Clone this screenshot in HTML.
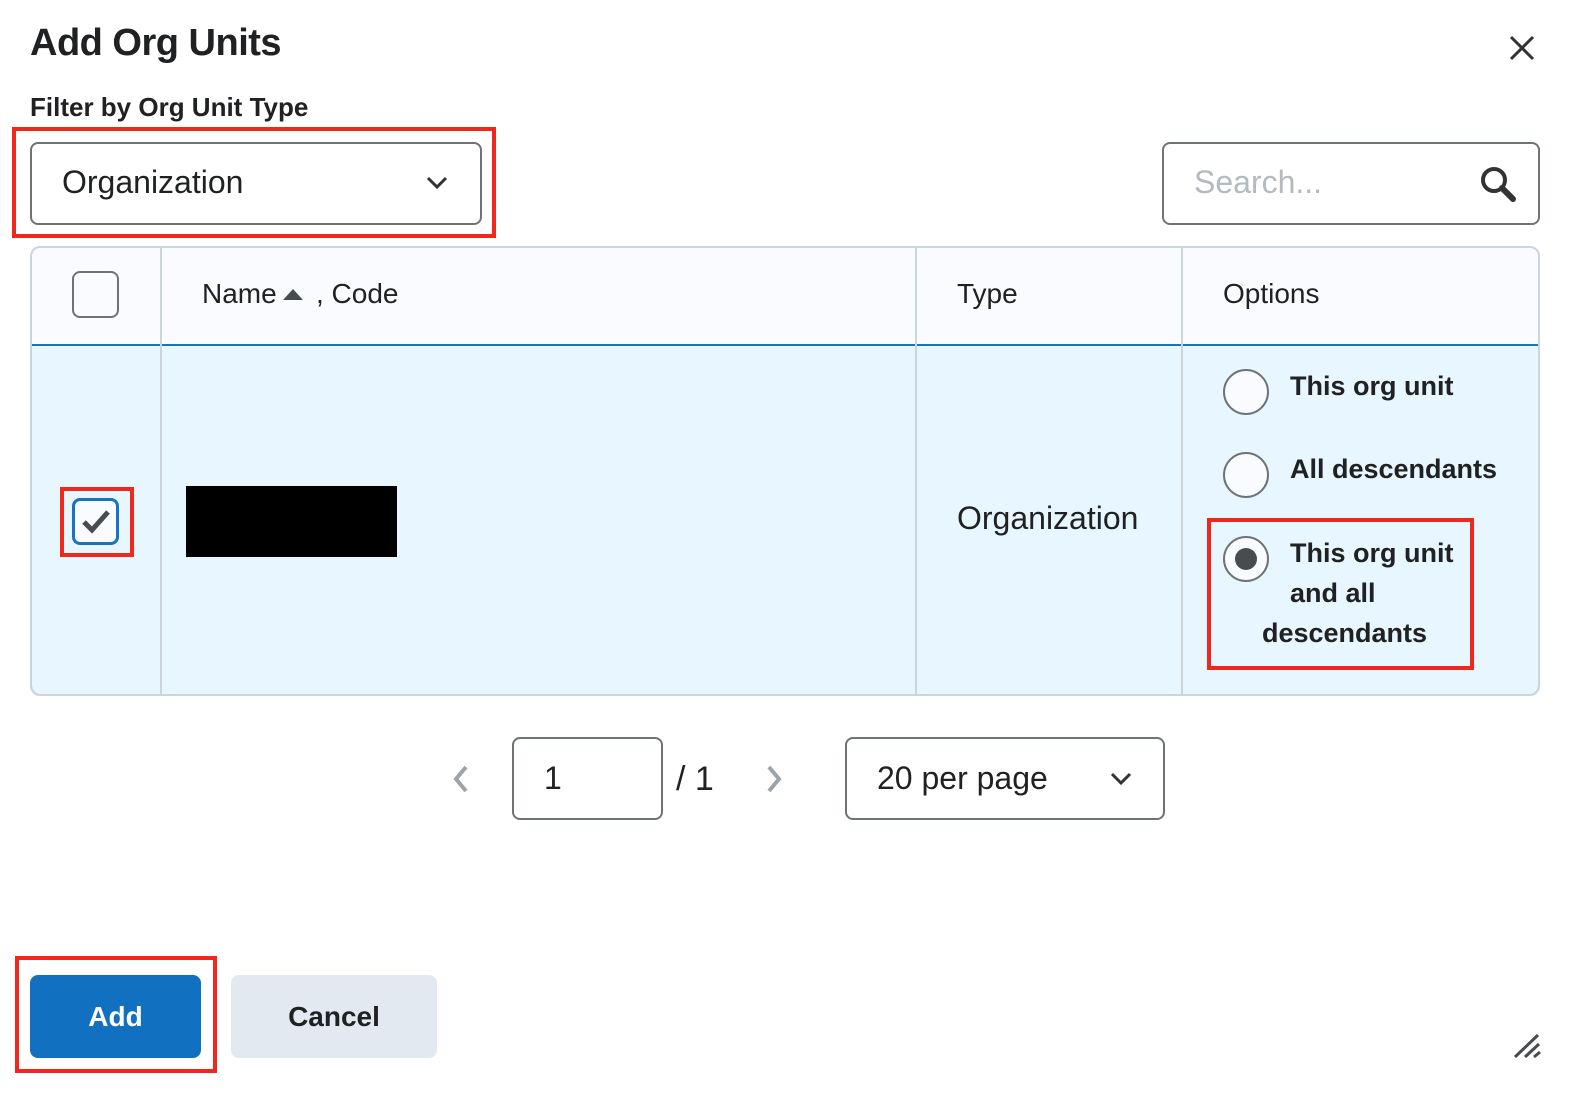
<!DOCTYPE html>
<html><head><style>
body{margin:0;width:1574px;height:1102px;background:#fff;position:relative;font-family:"Liberation Sans",sans-serif;color:#202122;overflow:hidden}
.a{position:absolute}
.red{position:absolute;border:4px solid #f2271c;box-sizing:border-box}
.radio{position:absolute;width:46px;height:46px;border:2px solid #6e7376;border-radius:50%;background:#f9fbff;box-sizing:border-box}
.rt{position:absolute;font-weight:bold;font-size:27px;line-height:40px}
</style></head><body>
<div class="a" style="left:30px;top:22px;font-size:38px;font-weight:bold;letter-spacing:-0.5px">Add Org Units</div>
<svg class="a" style="left:1508px;top:34px" width="28" height="28"><path d="M3 3L25 25M25 3L3 25" stroke="#333" stroke-width="3"/></svg>
<div class="a" style="left:30px;top:92px;font-size:26px;font-weight:bold">Filter by Org Unit Type</div>
<div class="red" style="left:12px;top:127px;width:484px;height:111px"></div>
<div class="a" style="left:30px;top:142px;width:452px;height:83px;border:2px solid #6e7376;border-radius:8px;box-sizing:border-box"></div>
<div class="a" style="left:62px;top:164px;font-size:32px">Organization</div>
<svg class="a" style="left:426px;top:176px" width="22" height="14"><path d="M2 2L11 11L20 2" stroke="#333" stroke-width="3" fill="none"/></svg>
<div class="a" style="left:1162px;top:142px;width:378px;height:83px;border:2px solid #6e7376;border-radius:8px;box-sizing:border-box"></div>
<div class="a" style="left:1194px;top:164px;font-size:32px;color:#b4bac0">Search...</div>
<svg class="a" style="left:1478px;top:164px" width="40" height="40"><circle cx="16" cy="16" r="11" stroke="#333" stroke-width="4" fill="none"/><path d="M24 24L35 35" stroke="#333" stroke-width="6" stroke-linecap="round"/></svg>
<!-- table -->
<div class="a" style="left:30px;top:246px;width:1510px;height:450px;border:2px solid #cdd5dc;border-radius:10px;box-sizing:border-box;background:#f9fbff;overflow:hidden">
 <div class="a" style="left:-2px;top:96px;width:1510px;height:352px;background:#e8f6ff;border:2px solid #1a73c0;border-radius:0 0 10px 10px;box-sizing:border-box"></div>
 <div class="a" style="left:128px;top:0;width:2px;height:450px;background:#cdd5dc"></div>
 <div class="a" style="left:883px;top:0;width:2px;height:450px;background:#cdd5dc"></div>
 <div class="a" style="left:1149px;top:0;width:2px;height:450px;background:#cdd5dc"></div>
</div>
<div class="a" style="left:72px;top:271px;width:47px;height:47px;border:2px solid #6e7376;border-radius:8px;box-sizing:border-box;background:#f9fbff"></div>
<div class="a" style="left:202px;top:278px;font-size:28px">Name</div>
<svg class="a" style="left:283px;top:288px" width="20" height="12"><path d="M0 12L10 1L20 12Z" fill="#494c4e"/></svg>
<div class="a" style="left:316px;top:278px;font-size:28px">, Code</div>
<div class="a" style="left:957px;top:278px;font-size:28px">Type</div>
<div class="a" style="left:1223px;top:278px;font-size:28px">Options</div>
<div class="red" style="left:60px;top:487px;width:74px;height:70px"></div>
<div class="a" style="left:72px;top:498px;width:47px;height:47px;border:3px solid #1a73c0;border-radius:8px;box-sizing:border-box;background:#f9fbff"></div>
<svg class="a" style="left:80px;top:507px" width="32" height="28"><path d="M4 15L12 23L28 5" stroke="#494c4e" stroke-width="5" fill="none"/></svg>
<div class="a" style="left:186px;top:486px;width:211px;height:71px;background:#000"></div>
<div class="a" style="left:957px;top:500px;font-size:32px">Organization</div>
<div class="radio" style="left:1223px;top:369px"></div>
<div class="rt" style="left:1290px;top:366px">This org unit</div>
<div class="radio" style="left:1223px;top:452px"></div>
<div class="rt" style="left:1290px;top:449px">All descendants</div>
<div class="red" style="left:1207px;top:518px;width:267px;height:152px"></div>
<div class="radio" style="left:1223px;top:536px"></div>
<div class="a" style="left:1235px;top:548px;width:22px;height:22px;border-radius:50%;background:#494c4e"></div>
<div class="rt" style="left:1290px;top:533px">This org unit</div>
<div class="rt" style="left:1290px;top:573px">and all</div>
<div class="rt" style="left:1262px;top:613px">descendants</div>
<!-- pager -->
<svg class="a" style="left:451px;top:764px" width="20" height="30"><path d="M15 3L5 15L15 27" stroke="#9ea3a7" stroke-width="4" fill="none"/></svg>
<div class="a" style="left:512px;top:737px;width:151px;height:83px;border:2px solid #6e7376;border-radius:8px;box-sizing:border-box"></div>
<div class="a" style="left:544px;top:760px;font-size:32px">1</div>
<div class="a" style="left:676px;top:760px;font-size:34px">/ 1</div>
<svg class="a" style="left:764px;top:764px" width="20" height="30"><path d="M5 3L15 15L5 27" stroke="#9ea3a7" stroke-width="4" fill="none"/></svg>
<div class="a" style="left:845px;top:737px;width:320px;height:83px;border:2px solid #6e7376;border-radius:8px;box-sizing:border-box"></div>
<div class="a" style="left:877px;top:760px;font-size:32px">20 per page</div>
<svg class="a" style="left:1110px;top:772px" width="22" height="14"><path d="M2 2L11 11L20 2" stroke="#333" stroke-width="3" fill="none"/></svg>
<!-- buttons -->
<div class="red" style="left:15px;top:956px;width:202px;height:117px"></div>
<div class="a" style="left:30px;top:975px;width:171px;height:83px;background:#1171c0;border-radius:8px;color:#fff;font-weight:bold;font-size:28px;text-align:center;line-height:83px">Add</div>
<div class="a" style="left:231px;top:975px;width:206px;height:83px;background:#e3e9f1;border-radius:8px;font-weight:bold;font-size:28px;text-align:center;line-height:83px">Cancel</div>
<svg class="a" style="left:1512px;top:1032px" width="30" height="28"><path d="M3 25L26 3M13 25L27 12M22 25L28 20" stroke="#494c4e" stroke-width="3"/></svg>
</body></html>
